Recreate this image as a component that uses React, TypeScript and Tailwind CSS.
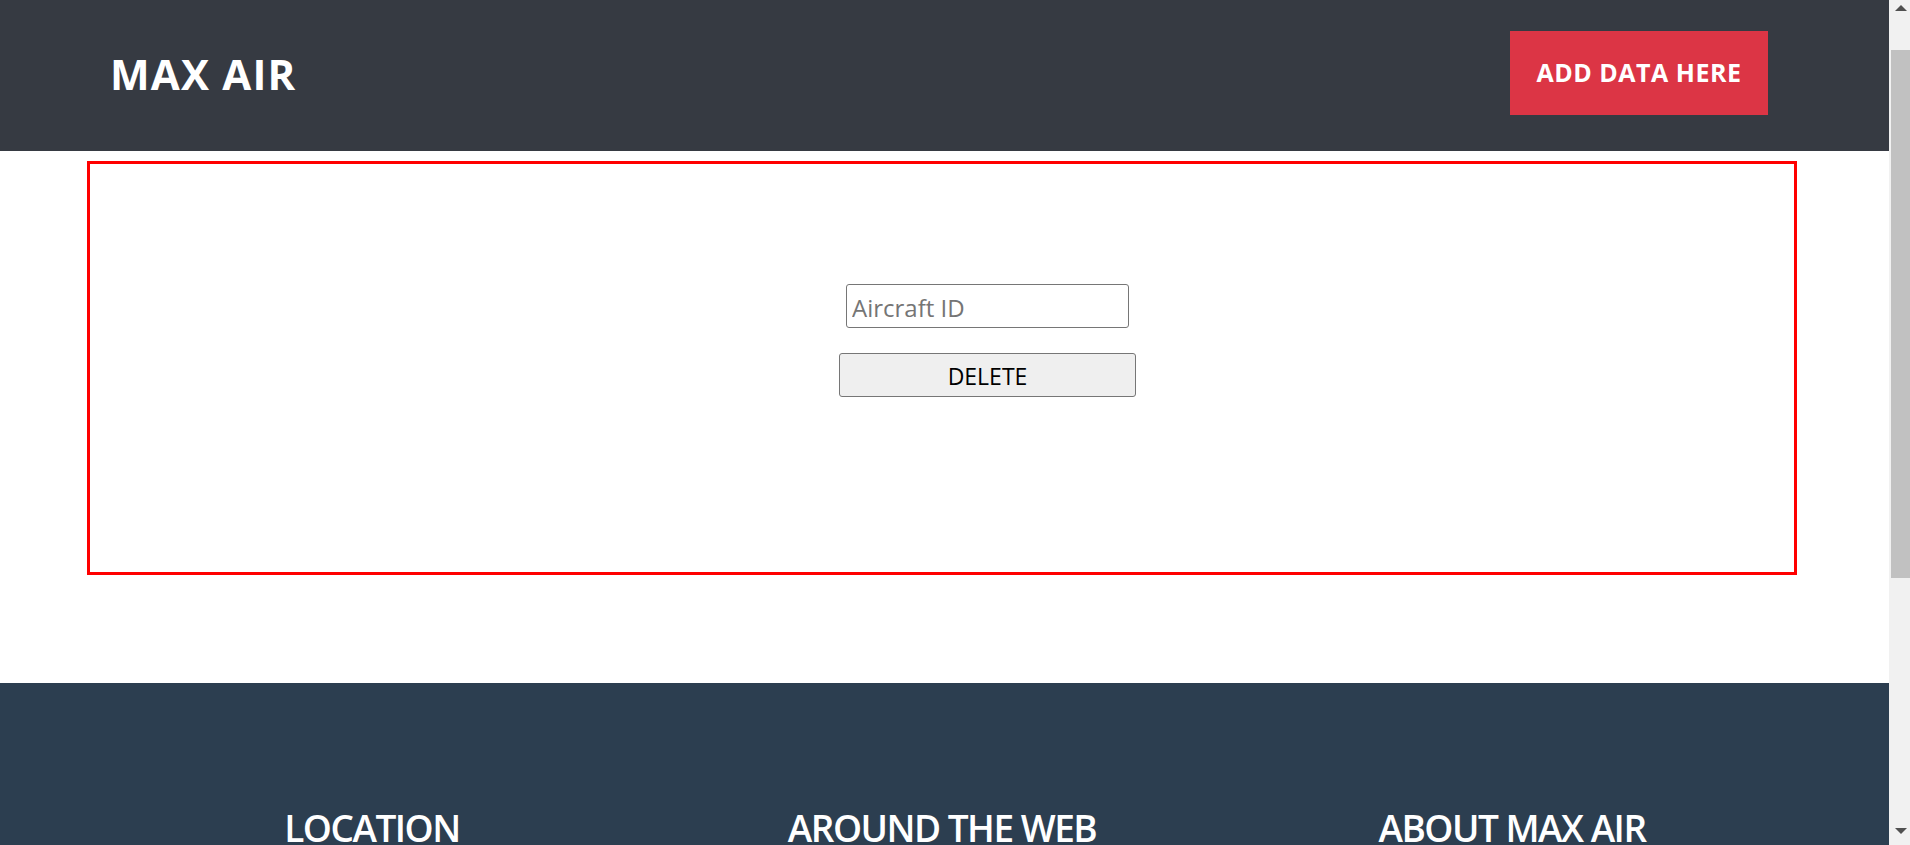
import { useState } from "react";

const brand = { fontFamily: '"Open Sans", "Noto Sans", sans-serif' };
const ui = { fontFamily: '"Open Sans", "Noto Sans", sans-serif' };

function Scrollbar() {
  return (
    <div className="w-[21px] h-full bg-[#f1f1f1] flex flex-col items-end shrink-0">
      <div className="w-full h-[17px] flex justify-center pt-[5px] pl-[3px]">
        <svg width="12" height="7" viewBox="0 0 12 7">
          <path d="M6 0 L12 6 L0 6 Z" fill="#505050" />
        </svg>
      </div>
      <div className="w-[19px] h-[528px] mt-[33px] bg-[#c1c1c1]" />
      <div className="flex-1" />
      <div className="w-full h-[17px] flex justify-center pl-[3px]">
        <svg width="12" height="7" viewBox="0 0 12 7">
          <path d="M0 0 L12 0 L6 6 Z" fill="#505050" />
        </svg>
      </div>
    </div>
  );
}

export default function App() {
  const [aircraftId, setAircraftId] = useState("");

  return (
    <div className="w-[1910px] h-[845px] flex overflow-hidden bg-white">
      <div className="flex-1 flex flex-col overflow-hidden">
        {/* Navbar */}
        <nav className="h-[151px] shrink-0 bg-[#363a42] flex items-start justify-between pl-[110px] pr-[121px]">
          <a
            href="#"
            className="mt-[53px] text-white font-bold text-[42px] leading-none tracking-[1.2px]"
            style={brand}
          >
            MAX AIR
          </a>
          <button
            className="mt-[31px] w-[258px] h-[84px] bg-[#dc3545] text-white font-bold text-[25px] leading-none tracking-[0.5px] pb-[2px]"
            style={brand}
          >
            ADD DATA HERE
          </button>
        </nav>

        {/* Delete form */}
        <section className="mt-[10px] ml-[87px] w-[1710px] h-[414px] shrink-0 border-[3px] border-[#ff0000] flex flex-col items-center pt-[120px] pl-[91px]">
          <input
            value={aircraftId}
            onChange={e => setAircraftId(e.target.value)}
            placeholder="Aircraft ID"
            className="w-[283px] h-[44px] border border-[#767676] rounded-[3px] px-[5px] pt-[2px] text-[24px] text-black placeholder:text-[#757575] outline-none"
            style={ui}
          />
          <button
            className="mt-[25px] w-[297px] h-[44px] bg-[#efefef] border border-[#767676] rounded-[3px] pt-[2px] text-[23px] text-black"
            style={ui}
          >
            DELETE
          </button>
        </section>

        <div className="h-[108px] shrink-0" />

        {/* Footer */}
        <footer className="flex-1 bg-[#2c3e50] text-white">
          <div className="w-[1710px] ml-[87px] grid grid-cols-3 pt-[126px]">
            <h4 className="text-center text-[37px] font-semibold leading-none tracking-[-1.5px]" style={ui}>LOCATION</h4>
            <h4 className="text-center text-[37px] font-semibold leading-none tracking-[-1.5px]" style={ui}>AROUND THE WEB</h4>
            <h4 className="text-center text-[37px] font-semibold leading-none tracking-[-1.5px]" style={ui}>ABOUT MAX AIR</h4>
          </div>
        </footer>
      </div>
      <Scrollbar />
    </div>
  );
}
